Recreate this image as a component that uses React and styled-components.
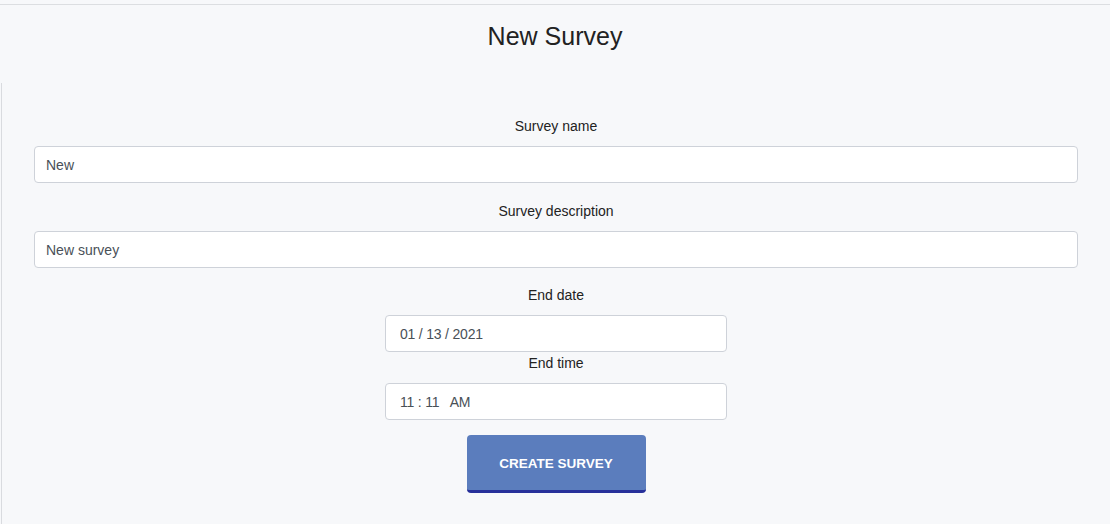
import styled, { createGlobalStyle } from "styled-components";

const GlobalStyle = createGlobalStyle`
  html, body {
    margin: 0;
    padding: 0;
    background: #f7f8fa;
    font-family: "Liberation Sans", Arial, sans-serif;
    color: #222;
  }
  * {
    box-sizing: border-box;
  }
`;

const Page = styled.div`
  min-height: 524px;
  padding-top: 4px;
`;

const Header = styled.header`
  height: 79px;
  border-top: 1px solid #dcdee1;
  padding-top: 16px;
  text-align: center;
`;

const Title = styled.h1`
  margin: 0;
  font-size: 25px;
  font-weight: 400;
  line-height: 30px;
  color: #222;
`;

const Content = styled.main`
  margin-left: 1px;
  border-left: 1px solid #d9dbdf;
  padding: 33px 32px 31px 32px;
  min-height: 441px;
`;

const Form = styled.form`
  display: flex;
  flex-direction: column;
  align-items: center;
`;

const Label = styled.label`
  display: block;
  font-size: 14px;
  line-height: 20px;
  color: #222;
  text-align: center;
  margin-top: ${(p) => p.$gap || 0}px;
  margin-bottom: 10px;
`;

const Input = styled.input`
  display: block;
  width: ${(p) => (p.$narrow ? "342px" : "100%")};
  height: 37px;
  padding: 0 ${(p) => (p.$narrow ? "14px" : "11px")};
  border: 1px solid #ced2d9;
  border-radius: 4px;
  background: #fff;
  font-family: "Liberation Sans", Arial, sans-serif;
  font-size: 14px;
  color: #495057;
  outline: none;
  white-space: pre;
  letter-spacing: ${(p) => (p.$narrow ? "-0.2px" : "0")};
`;

const Button = styled.button`
  margin-top: 15px;
  width: 179px;
  height: 58px;
  border: none;
  border-bottom: 3px solid #27309a;
  border-radius: 4px;
  background: #5b7dbd;
  color: #fff;
  font-family: "Liberation Sans", Arial, sans-serif;
  font-size: 13.5px;
  font-weight: 700;
  text-transform: uppercase;
  padding-top: 2px;
  cursor: pointer;
`;

function App() {
  return (
    <Page>
      <GlobalStyle />
      <Header>
        <Title>New Survey</Title>
      </Header>
      <Content>
        <Form onSubmit={(e) => e.preventDefault()}>
          <Label htmlFor="name">Survey name</Label>
          <Input id="name" defaultValue="New" />
          <Label htmlFor="desc" $gap={18}>
            Survey description
          </Label>
          <Input id="desc" defaultValue="New survey" />
          <Label htmlFor="date" $gap={17}>
            End date
          </Label>
          <Input id="date" $narrow defaultValue="01 / 13 / 2021" />
          <Label htmlFor="time" $gap={1}>
            End time
          </Label>
          <Input id="time" $narrow defaultValue="11 : 11   AM" />
          <Button type="submit">Create survey</Button>
        </Form>
      </Content>
    </Page>
  );
}

export default App;
